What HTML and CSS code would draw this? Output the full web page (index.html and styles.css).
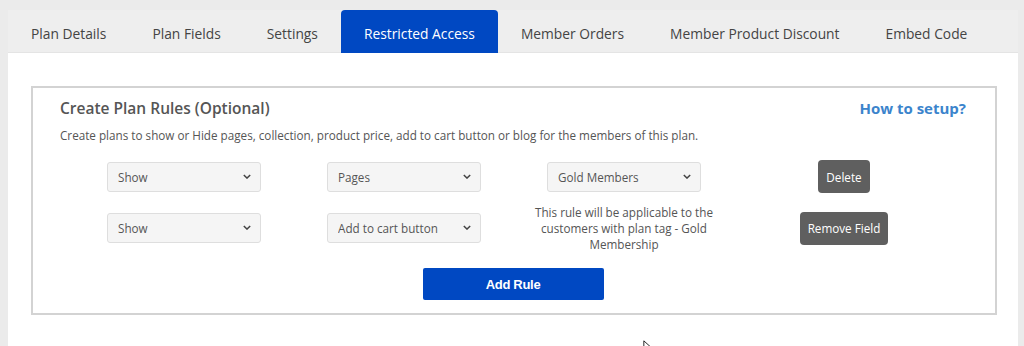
FILE: index.html
```html
<!DOCTYPE html>
<html>
  <head>
    <link rel="stylesheet" href="styles.css">
  </head>
  <body>
    <div class="panel">
      <nav class="tabs">
        <a class="tab">Plan Details</a>
        <a class="tab">Plan Fields</a>
        <a class="tab">Settings</a>
        <a class="tab active">Restricted Access</a>
        <a class="tab">Member Orders</a>
        <a class="tab">Member Product Discount</a>
        <a class="tab">Embed Code</a>
      </nav>

      <div class="content">
        <div class="rules-box">
          <div class="box-head">
            <h2>Create Plan Rules (Optional)</h2>
            <a class="help-link">How to setup?</a>
          </div>
          <p class="desc">Create plans to show or Hide pages, collection, product price, add to cart button or blog for the members of this plan.</p>

          <div class="rule-grid">
            <div class="select-wrap">
              <select><option>Show</option></select>
              <svg class="chevron" viewBox="0 0 10 6"><path d="M1 1l4 4 4-4" /></svg>
            </div>
            <div class="select-wrap">
              <select><option>Pages</option></select>
              <svg class="chevron" viewBox="0 0 10 6"><path d="M1 1l4 4 4-4" /></svg>
            </div>
            <div class="select-wrap">
              <select><option>Gold Members</option></select>
              <svg class="chevron" viewBox="0 0 10 6"><path d="M1 1l4 4 4-4" /></svg>
            </div>
            <button class="btn-dark">Delete</button>

            <div class="select-wrap">
              <select><option>Show</option></select>
              <svg class="chevron" viewBox="0 0 10 6"><path d="M1 1l4 4 4-4" /></svg>
            </div>
            <div class="select-wrap">
              <select><option>Add to cart button</option></select>
              <svg class="chevron" viewBox="0 0 10 6"><path d="M1 1l4 4 4-4" /></svg>
            </div>
            <p class="rule-note">This rule will be applicable to the customers with plan tag - Gold Membership</p>
            <button class="btn-dark">Remove Field</button>
          </div>

          <div class="actions">
            <button class="add-rule">Add Rule</button>
          </div>
        </div>
      </div>

      <svg class="cursor" viewBox="0 0 12 18"><path d="M1 1v14l3.5-3.5 2.5 5.5 2-1-2.5-5.5h5z" /></svg>
    </div>
  </body>
</html>
```

FILE: styles.css
```css
html,
body {
  margin: 0;
  height: 100%;
}
body {
  background: #ebebeb;
  font-family: 'Open Sans', 'Noto Sans', sans-serif;
  color: #555;
  overflow: hidden;
}
.panel {
  position: relative;
  margin: 10px 6px 0 8px;
  height: 336px;
  background: #fff;
}
.tabs {
  display: flex;
  height: 43px;
  background: #eeeeee;
  border-bottom: 1px solid #e4e4e4;
  box-sizing: border-box;
}
.tab {
  display: flex;
  align-items: center;
  padding: 4px 23px 0;
  font-size: 13.8px;
  color: #444;
  white-space: nowrap;
  cursor: pointer;
}
.tab.active {
  background: #0048c2;
  color: #fff;
  border-radius: 4px 4px 0 0;
  margin-bottom: -1px;
}
.content {
  padding: 33px 21px 0 23px;
}
.rules-box {
  border: 2px solid #d3d3d3;
  padding: 10px 29px 13px 27px;
}
.box-head {
  display: flex;
  justify-content: space-between;
  align-items: center;
}
.box-head h2 {
  margin: 0;
  font-size: 15.5px;
  font-weight: 600;
  line-height: 20px;
  color: #555;
}
.help-link {
  font-size: 15px;
  font-weight: 700;
  color: #3b84cc;
  cursor: pointer;
}
.desc {
  margin: 9px 0 17px;
  font-size: 11.7px;
  line-height: 16px;
  color: #555;
}
.rule-grid {
  display: grid;
  grid-template-columns: repeat(4, 220px);
  row-gap: 11px;
  justify-content: center;
  justify-items: center;
  align-items: center;
  margin-left: -27px;
  margin-right: -29px;
}
.select-wrap {
  position: relative;
  width: 154px;
}
.select-wrap select {
  appearance: none;
  -webkit-appearance: none;
  width: 100%;
  height: 30px;
  padding: 0 24px 0 10px;
  background: #f5f5f5;
  border: 1px solid #dedede;
  border-radius: 3px;
  font-family: inherit;
  font-size: 11.7px;
  color: #555;
}
.chevron {
  position: absolute;
  right: 10px;
  top: 12px;
  width: 8px;
  height: 5px;
  fill: none;
  stroke: #444;
  stroke-width: 1.8;
}
.btn-dark {
  height: 33px;
  padding: 0 8px;
  background: #5f5f5f;
  border: none;
  border-radius: 4px;
  color: #fff;
  font-family: inherit;
  font-size: 11.7px;
}
.rule-note {
  margin: 0;
  max-width: 182px;
  text-align: center;
  font-size: 11.7px;
  line-height: 16px;
  color: #555;
}
.actions {
  display: flex;
  justify-content: center;
  margin-top: 16px;
}
.add-rule {
  width: 181px;
  height: 32px;
  background: #0048c2;
  border: none;
  border-radius: 2px;
  color: #fff;
  font-family: 'Liberation Sans', Arial, sans-serif;
  font-size: 13px;
  font-weight: 700;
  letter-spacing: -0.3px;
}
.cursor {
  position: absolute;
  left: 635px;
  top: 330px;
  width: 10px;
  height: 15px;
  fill: #fff;
  stroke: #000;
  stroke-width: 1;
}
```
